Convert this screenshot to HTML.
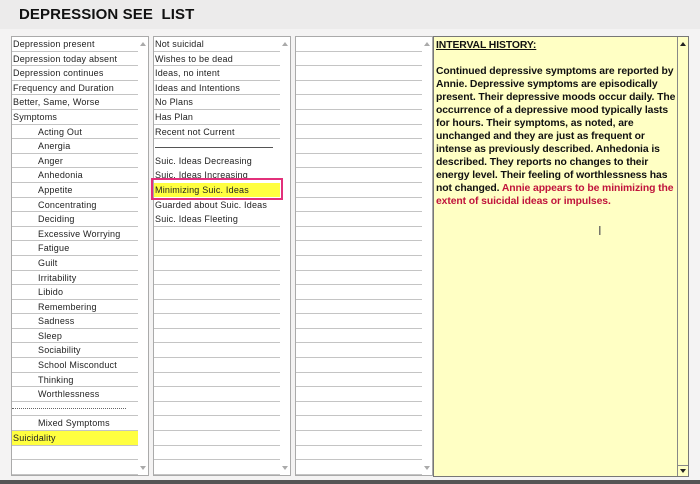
<!DOCTYPE html>
<html><head><meta charset="utf-8"><style>
*{margin:0;padding:0;box-sizing:border-box}
body{width:700px;height:484px;background:#f4f3f3;position:relative;overflow:hidden;font-family:"Liberation Sans",sans-serif}
.hdr{position:absolute;left:0;top:0;width:700px;height:29px;background:#ecebeb}
.hdr h1{position:absolute;left:19px;top:6px;font-size:15px;font-weight:bold;color:#111;letter-spacing:0.1px}
.list{position:absolute;top:36px;height:440px;border:1px solid #aaa;background:#fff}
.rows{position:absolute;left:0;top:0;bottom:0;display:flex;flex-direction:column;border-right:1px solid #aaa}
.rows div{flex:1;border-bottom:1px solid #c4c4c4;font-size:9px;color:#222;line-height:14px;padding-left:1px;white-space:nowrap;overflow:hidden;letter-spacing:0.2px}
.rows div.i{padding-left:26px}
.rows div.nb{border-bottom:1px solid #fff}
.sb{position:absolute;right:0;top:0;bottom:0;width:10px;background:#fff}
.sb .u,.sb .d{position:absolute;left:2px;width:0;height:0;border-left:3px solid transparent;border-right:3px solid transparent}
.sb .u{top:5px;border-bottom:4px solid #aaa}
.sb .d{bottom:5px;border-top:4px solid #aaa}
.panel{position:absolute;left:433px;top:36px;width:256px;height:441px;background:#ffffc4;border:1px solid #777}
.ptxt{position:absolute;left:2px;top:2px;font-size:10.4px;font-weight:bold;line-height:13px;color:#111;white-space:nowrap;letter-spacing:-0.1px}
.psb{position:absolute;right:0;top:0;bottom:0;width:11px;border-left:1px solid #888}
.bot{position:absolute;left:0;top:480px;width:700px;height:4px;background:#555}
</style></head><body>
<div class="hdr"><h1>DEPRESSION SEE&nbsp; LIST</h1></div>

<div class="list" style="left:11px;width:138px">
<div class="rows" style="width:127px">
<div>Depression present</div><div>Depression today absent</div><div>Depression continues</div><div>Frequency and Duration</div><div>Better, Same, Worse</div><div>Symptoms</div>
<div class="i">Acting Out</div><div class="i">Anergia</div><div class="i">Anger</div><div class="i">Anhedonia</div><div class="i">Appetite</div><div class="i">Concentrating</div><div class="i">Deciding</div><div class="i">Excessive Worrying</div><div class="i">Fatigue</div><div class="i">Guilt</div><div class="i">Irritability</div><div class="i">Libido</div><div class="i">Remembering</div><div class="i">Sadness</div><div class="i">Sleep</div><div class="i">Sociability</div><div class="i">School Misconduct</div><div class="i">Thinking</div><div class="i">Worthlessness</div>
<div style="position:relative"><span style="position:absolute;left:0;top:6px;width:114px;border-top:1px dotted #666"></span></div>
<div class="i">Mixed Symptoms</div><div style="background:#ffff40">Suicidality</div><div></div><div></div>
</div><div class="sb"><span class="u"></span><span class="d"></span></div></div>

<div class="list" style="left:153px;width:138px">
<div class="rows" style="width:127px">
<div>Not suicidal</div><div>Wishes to be dead</div><div>Ideas, no intent</div><div>Ideas and Intentions</div><div>No Plans</div><div>Has Plan</div><div>Recent not Current</div>
<div class="nb" style="position:relative"><span style="position:absolute;left:1px;top:8px;width:118px;border-top:1px solid #555"></span></div>
<div class="nb">Suic. Ideas Decreasing</div><div class="nb">Suic. Ideas Increasing</div><div class="nb" style="background:#ffff40">Minimizing Suic. Ideas</div><div class="nb">Guarded about Suic. Ideas</div><div>Suic. Ideas Fleeting</div>
<div></div><div></div><div></div><div></div><div></div><div></div><div></div><div></div><div></div><div></div><div></div><div></div><div></div><div></div><div></div><div></div><div></div>
</div><div class="sb"><span class="u"></span><span class="d"></span></div></div>
<div style="position:absolute;left:151px;top:178px;width:132px;height:22px;border:2px solid #e2307a"></div>

<div class="list" style="left:295px;width:138px">
<div class="rows" style="width:127px">
<div></div><div></div><div></div><div></div><div></div><div></div><div></div><div></div><div></div><div></div><div></div><div></div><div></div><div></div><div></div><div></div><div></div><div></div><div></div><div></div><div></div><div></div><div></div><div></div><div></div><div></div><div></div><div></div><div></div><div></div>
</div><div class="sb"><span class="u"></span><span class="d"></span></div></div>

<div class="panel">
<div class="ptxt"><u>INTERVAL HISTORY:</u><br><br>Continued depressive symptoms are reported by<br>Annie. Depressive symptoms are episodically<br>present. Their depressive moods occur daily. The<br>occurrence of a depressive mood typically lasts<br>for hours. Their symptoms, as noted, are<br>unchanged and they are just as frequent or<br>intense as previously described. Anhedonia is<br>described. They reports no changes to their<br>energy level. Their feeling of worthlessness has<br>not changed. <span style="color:#c0143c">Annie appears to be minimizing the<br>extent of suicidal ideas or impulses.</span></div>
<div style="position:absolute;left:164px;top:186px;font-size:13px;color:#555">I</div>
<div class="psb"><span style="position:absolute;left:2px;top:5px;border-left:3px solid transparent;border-right:3px solid transparent;border-bottom:4px solid #222"></span><span style="position:absolute;left:0;right:0;bottom:10px;border-top:1px solid #888"></span><span style="position:absolute;left:2px;bottom:3px;border-left:3px solid transparent;border-right:3px solid transparent;border-top:4px solid #222"></span></div>
</div>
<div class="bot"></div>
</body></html>
